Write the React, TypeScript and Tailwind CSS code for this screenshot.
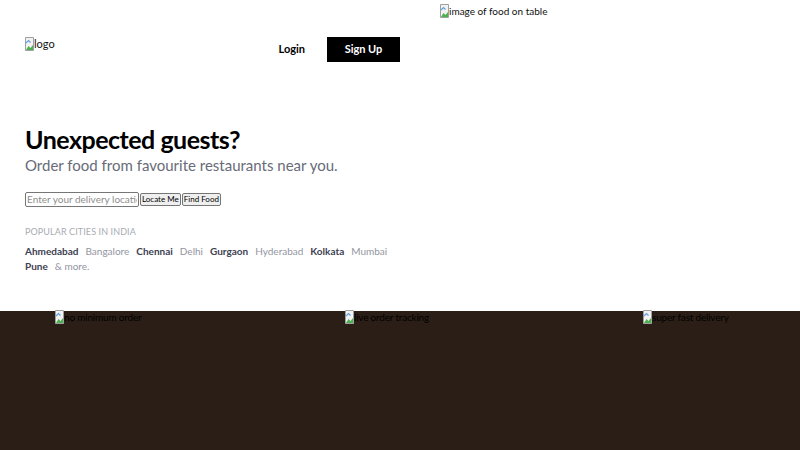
import React from 'react';

const BrokenImg: React.FC<{ alt: string; className?: string }> = ({ alt, className }) => (
  <span className={`inline-flex items-start ${className ?? ''}`}>
    <svg width="9" height="14" viewBox="0 0 9 14" className="shrink-0">
      <path d="M0.5 0.5h8v13h-8z" fill="#f2f2f2" stroke="#a0a0a0" strokeWidth="1" />
      <path d="M1 13l2.5-4 2 2 2.5-3v5z" fill="#4caf50" />
      <path d="M1 6l2.5-2.5 2 2" fill="none" stroke="#64a0e0" strokeWidth="1.2" />
    </svg>
    <span className="leading-[14px]">{alt}</span>
  </span>
);

const cities = [
  { name: 'Ahmedabad', dark: true },
  { name: 'Bangalore', dark: false },
  { name: 'Chennai', dark: true },
  { name: 'Delhi', dark: false },
  { name: 'Gurgaon', dark: true },
  { name: 'Hyderabad', dark: false },
  { name: 'Kolkata', dark: true },
  { name: 'Mumbai', dark: false },
  { name: 'Pune', dark: true },
];

export default function App() {
  return (
    <div className="w-[800px] h-[450px] overflow-hidden bg-white font-['Lato',sans-serif]">
      <div className="flex h-[311px]">
        {/* Left hero */}
        <div className="w-[440px] shrink-0 pl-[25px] pr-[40px]">
          <div className="flex items-center justify-between pt-[37px]">
            <BrokenImg alt="logo" className="text-[11px] text-[#111] -mt-[12px]" />
            <div className="flex items-center">
              <button className="text-[11px] font-bold text-black mr-[22px]">Login</button>
              <button className="w-[73px] h-[25px] bg-black text-white text-[11px] font-bold">Sign Up</button>
            </div>
          </div>

          <h1 className="mt-[62px] text-[25px] font-bold text-black leading-[31px] tracking-[-0.5px]">Unexpected guests?</h1>
          <p className="text-[15px] text-[#686b78] leading-[20px]">Order food from favourite restaurants near you.</p>

          <div className="flex items-center mt-[17px]">
            <input
              placeholder="Enter your delivery location"
              className="w-[114px] h-[15px] border border-[#767676] rounded-[2px] px-[1px] text-[10px] placeholder:text-[#8e8e8e] outline-none"
            />
            <button className="ml-[1px] h-[13px] px-[1px] border border-[#767676] rounded-[2px] bg-[#efefef] text-[8px] leading-[11px] text-black">Locate Me</button>
            <button className="ml-[1px] h-[13px] px-[1px] border border-[#767676] rounded-[2px] bg-[#efefef] text-[8px] leading-[11px] text-black">Find Food</button>
          </div>

          <div className="mt-[18px] text-[9px] text-[#a9abb2] tracking-[0.1px]">POPULAR CITIES IN INDIA</div>
          <div className="mt-[5px] flex flex-wrap w-[375px] text-[10px] leading-[15px]">
            {cities.map(c => (
              <span
                key={c.name}
                className={c.dark ? 'mr-[7px] font-bold text-[#3d4152]' : 'mr-[7px] text-[#93959f]'}
              >
                {c.name}
              </span>
            ))}
            <span className="text-[#93959f]">&amp; more.</span>
          </div>
        </div>

        {/* Right image */}
        <div className="flex-1">
          <BrokenImg alt="image of food on table" className="text-[10px] text-[#111]" />
        </div>
      </div>

      {/* Features */}
      <div className="h-[139px] bg-[#2b1e16] flex text-[10px] text-black tracking-[-0.2px]">
        <div className="w-[290px] pl-[55px] -mt-[1px]">
          <BrokenImg alt="no minimum order" />
        </div>
        <div className="w-[298px] pl-[55px] -mt-[1px]">
          <BrokenImg alt="live order tracking" />
        </div>
        <div className="flex-1 pl-[55px] -mt-[1px]">
          <BrokenImg alt="super fast delivery" />
        </div>
      </div>
    </div>
  );
}
